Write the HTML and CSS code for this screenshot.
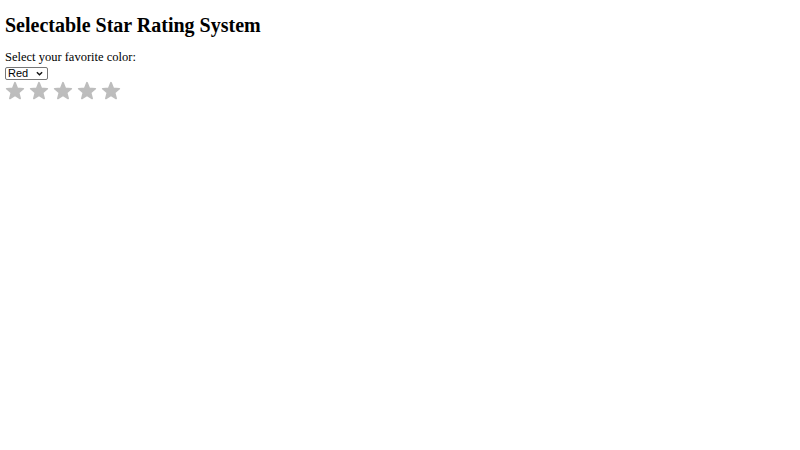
FILE: index.html
```html
<!DOCTYPE html>
<html>
<head>
<meta charset="utf-8">
<link rel="stylesheet" href="styles.css">
</head>
<body>
<h1 class="title">Selectable Star Rating System</h1>
<label class="label" for="color">Select your favorite color:</label>
<div class="picker-wrap">
<select id="color" class="picker">
<option>Red</option>
<option>Green</option>
<option>Blue</option>
</select>
<svg class="chevron" viewBox="0 0 8 5"><path d="M1 1 L4 4 L7 1"/></svg>
</div>
<div class="stars">
<svg class="star" viewBox="0 0 24 24"><path d="M12 2 L14.7 8.78 L21.99 9.25 L16.37 13.92 L18.17 20.99 L12 17.1 L5.83 20.99 L7.63 13.92 L2.01 9.25 L9.3 8.78 Z"/></svg>
<svg class="star" viewBox="0 0 24 24"><path d="M12 2 L14.7 8.78 L21.99 9.25 L16.37 13.92 L18.17 20.99 L12 17.1 L5.83 20.99 L7.63 13.92 L2.01 9.25 L9.3 8.78 Z"/></svg>
<svg class="star" viewBox="0 0 24 24"><path d="M12 2 L14.7 8.78 L21.99 9.25 L16.37 13.92 L18.17 20.99 L12 17.1 L5.83 20.99 L7.63 13.92 L2.01 9.25 L9.3 8.78 Z"/></svg>
<svg class="star" viewBox="0 0 24 24"><path d="M12 2 L14.7 8.78 L21.99 9.25 L16.37 13.92 L18.17 20.99 L12 17.1 L5.83 20.99 L7.63 13.92 L2.01 9.25 L9.3 8.78 Z"/></svg>
<svg class="star" viewBox="0 0 24 24"><path d="M12 2 L14.7 8.78 L21.99 9.25 L16.37 13.92 L18.17 20.99 L12 17.1 L5.83 20.99 L7.63 13.92 L2.01 9.25 L9.3 8.78 Z"/></svg>
</div>
</body>
</html>
```
FILE: styles.css
```css
body {
  margin: 0;
  padding: 5px;
  font-family: "Liberation Serif", serif;
}
.title {
  font-size: 20px;
  line-height: 23px;
  margin: 9px 0 13px;
}
.label {
  display: block;
  font-size: 12.5px;
  line-height: 15px;
  margin-bottom: 2px;
}
.picker-wrap {
  position: relative;
  width: 43px;
  height: 13px;
}
.picker {
  appearance: none;
  -webkit-appearance: none;
  display: block;
  box-sizing: border-box;
  font-family: "Liberation Sans", sans-serif;
  font-size: 11px;
  line-height: 11px;
  width: 43px;
  height: 13px;
  padding: 0 0 0 2px;
  margin: 0;
  border: 1px solid #767676;
  border-radius: 2px;
  background: #fff;
  color: #000;
}
.chevron {
  position: absolute;
  right: 5px;
  top: 4px;
  width: 7px;
  height: 5px;
  fill: none;
  stroke: #111;
  stroke-width: 1.6;
  pointer-events: none;
}
.stars {
  display: flex;
  gap: 4px;
  margin-top: 1px;
}
.star {
  width: 20px;
  height: 20px;
  fill: #bdbdbd;
  stroke: #bdbdbd;
  stroke-width: 2;
  stroke-linejoin: round;
}
```
